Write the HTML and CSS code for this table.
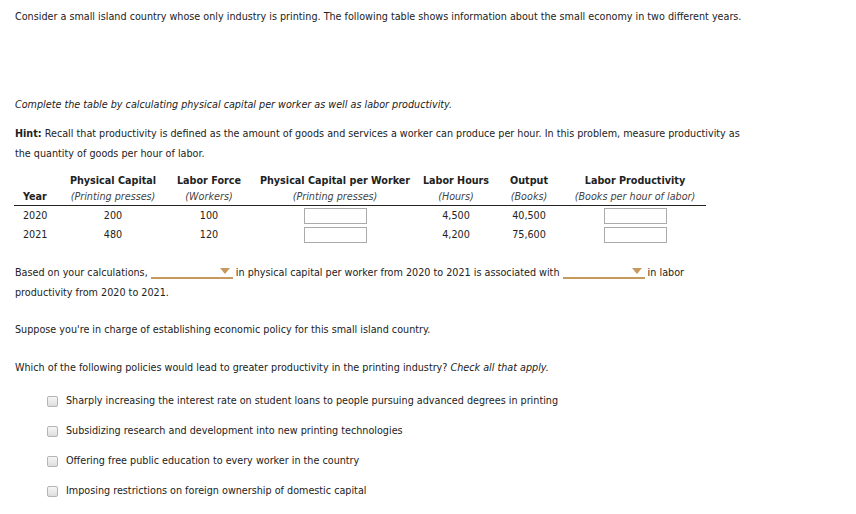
FILE: index.html
```html
<!DOCTYPE html>
<html>
<head>
<meta charset="utf-8">
<link rel="stylesheet" href="styles.css">
</head>
<body>
<div class="page">
  <p class="intro">Consider a small island country whose only industry is printing. The following table shows information about the small economy in two different years.</p>
  <p class="task"><em>Complete the table by calculating physical capital per worker as well as labor productivity.</em></p>
  <p class="hint"><strong>Hint:</strong> Recall that productivity is defined as the amount of goods and services a worker can produce per hour. In this problem, measure productivity as the quantity of goods per hour of labor.</p>
  <table class="data">
    <colgroup>
      <col class="c-year"><col class="c-pc"><col class="c-lf"><col class="c-pcw"><col class="c-lh"><col class="c-out"><col class="c-lp">
    </colgroup>
    <thead>
      <tr class="h1">
        <th></th><th>Physical Capital</th><th>Labor Force</th><th>Physical Capital per Worker</th><th>Labor Hours</th><th>Output</th><th>Labor Productivity</th>
      </tr>
      <tr class="h2">
        <th class="year">Year</th><th class="unit">(Printing presses)</th><th class="unit">(Workers)</th><th class="unit">(Printing presses)</th><th class="unit">(Hours)</th><th class="unit">(Books)</th><th class="unit">(Books per hour of labor)</th>
      </tr>
    </thead>
    <tbody>
      <tr>
        <td class="year">2020</td><td>200</td><td>100</td><td><span class="box"></span></td><td>4,500</td><td>40,500</td><td><span class="box"></span></td>
      </tr>
      <tr>
        <td class="year">2021</td><td>480</td><td>120</td><td><span class="box"></span></td><td>4,200</td><td>75,600</td><td><span class="box"></span></td>
      </tr>
    </tbody>
  </table>
  <p class="based">Based on your calculations, <span class="drop"></span> in physical capital per worker from 2020 to 2021 is associated with <span class="drop"></span> in labor productivity from 2020 to 2021.</p>
  <p class="suppose">Suppose you're in charge of establishing economic policy for this small island country.</p>
  <p class="which">Which of the following policies would lead to greater productivity in the printing industry? <em>Check all that apply.</em></p>
  <ul class="opts">
    <li><span class="cb"></span>Sharply increasing the interest rate on student loans to people pursuing advanced degrees in printing</li>
    <li><span class="cb"></span>Subsidizing research and development into new printing technologies</li>
    <li><span class="cb"></span>Offering free public education to every worker in the country</li>
    <li><span class="cb"></span>Imposing restrictions on foreign ownership of domestic capital</li>
  </ul>
</div>
</body>
</html>
```
FILE: styles.css
```css
html, body {
  margin: 0;
  padding: 0;
  background: #fff;
}
.page {
  font-family: "DejaVu Sans", Verdana, sans-serif;
  font-size: 9.65px;
  line-height: 20px;
  color: #222;
  padding: 7px 0 0 15px;
  width: 735px;
}
p {
  margin: 0;
}
.task {
  margin-top: 68px;
}
.hint {
  margin-top: 9px;
}
.data {
  margin-top: 9px;
  margin-left: -1px;
  border-collapse: collapse;
  width: 692px;
  table-layout: fixed;
}
.c-year { width: 46px; }
.c-pc { width: 106px; }
.c-lf { width: 86px; }
.c-pcw { width: 166px; }
.c-lh { width: 76px; }
.c-out { width: 70px; }
.c-lp { width: 142px; }
.data th, .data td {
  padding: 0;
  text-align: center;
  white-space: nowrap;
}
.data th {
  font-weight: bold;
  line-height: 16px;
  height: 16px;
}
.data .h2 th {
  border-bottom: 1px solid #222;
}
.data th.unit {
  font-weight: normal;
  font-style: italic;
  color: #444;
}
.data .year {
  text-align: left;
  padding-left: 9px;
}
.data td {
  height: 19px;
  line-height: 19px;
  vertical-align: middle;
}
.box {
  display: inline-block;
  width: 61px;
  height: 14px;
  border: 1px solid #aaa;
  vertical-align: middle;
  background: #fff;
}
.based {
  margin-top: 19px;
  max-width: 690px;
}
.drop {
  display: inline-block;
  position: relative;
  width: 82px;
  height: 12px;
  border-bottom: 2px solid #c49a5e;
  vertical-align: -3px;
}
.drop::after {
  content: "";
  position: absolute;
  right: 3px;
  top: 3px;
  border-left: 5px solid transparent;
  border-right: 5px solid transparent;
  border-top: 6px solid #c49a5e;
}
.suppose {
  margin-top: 17px;
}
.which {
  margin-top: 18px;
}
.opts {
  list-style: none;
  margin: 8px 0 0 0;
  padding: 0 0 0 32px;
}
.opts li {
  height: 30px;
  line-height: 30px;
  display: flex;
  align-items: center;
}
.cb {
  display: inline-block;
  width: 9px;
  height: 9px;
  border: 1px solid #b4b4b4;
  border-radius: 2px;
  background: linear-gradient(#f6f6f6, #dedede);
  margin-right: 8px;
  flex: none;
}
```
